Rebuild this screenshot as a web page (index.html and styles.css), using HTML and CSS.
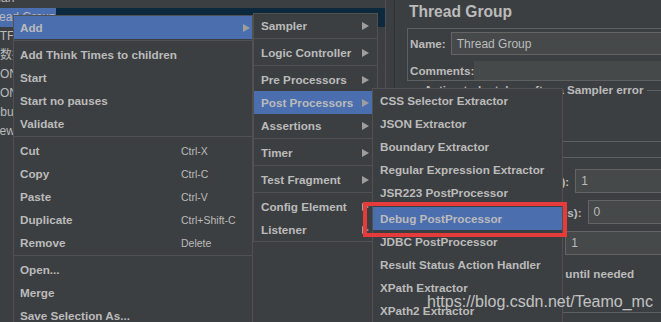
FILE: index.html
```html
<!DOCTYPE html>
<html lang="en">
<head>
  <meta charset="UTF-8">
  <title>Thread Group</title>
  <link rel="stylesheet" href="styles.css">
</head>
<body>

  <div class="app">
    <div class="tree">
      <div class="tree-row"><span class="node cut-plan">Test Plan</span></div>
      <div class="tree-row selected"><span class="node cut-thread">Thread Group</span></div>
      <div class="tree-row"><span class="node cut-utf">UTF-8 编码</span></div>
      <div class="tree-row"><span class="node cut-csv">CSV 数据文件设置</span></div>
      <div class="tree-row"><span class="node cut-json">JSON Extractor</span></div>
      <div class="tree-row"><span class="node cut-json">JSON Assertion</span></div>
      <div class="tree-row"><span class="node cut-debug">Debug Sampler</span></div>
      <div class="tree-row"><span class="node cut-view">View Results Tree</span></div>
    </div>

    <div class="splitter"></div>

    <div class="editor">
      <div class="editor-title">Thread Group</div>

      <div class="name-box">
        <div class="field-row">
          <label class="name-label">Name:</label>
          <div class="input">Thread Group</div>
        </div>
        <div class="field-row comments-row">
          <label>Comments:</label>
          <div class="area"></div>
        </div>
      </div>

      <fieldset class="group error-group">
        <legend>Action to be taken after a Sampler error</legend>
        <div class="radios">
          <span class="radio"></span><span>Continue</span>
        </div>
      </fieldset>

      <fieldset class="group props-group">
        <legend>Thread Properties</legend>
        <div class="prop-row">
          <label>Number of Threads (users):</label>
          <div class="input">1</div>
        </div>
        <div class="prop-row">
          <label>Ramp-up period (in seconds):</label>
          <div class="input">0</div>
        </div>
        <div class="prop-row loop-row">
          <label>Loop Count:</label>
          <span class="check"></span>
          <span class="forever">Forever</span>
          <div class="input">1</div>
        </div>
        <div class="check-row">
          <span class="check"></span>
          <span>Delay Thread creation until needed</span>
        </div>
        <div class="check-row">
          <span class="check"></span>
          <span>Scheduler</span>
        </div>
      </fieldset>
    </div>
  </div>

  <div class="menu main-menu">
    <div class="item active"><span class="label">Add</span><span class="arrow"></span></div>
    <div class="sep"></div>
    <div class="item"><span class="label">Add Think Times to children</span></div>
    <div class="item"><span class="label">Start</span></div>
    <div class="item"><span class="label">Start no pauses</span></div>
    <div class="item"><span class="label">Validate</span></div>
    <div class="sep"></div>
    <div class="item"><span class="label">Cut</span><span class="key">Ctrl-X</span></div>
    <div class="item"><span class="label">Copy</span><span class="key">Ctrl-C</span></div>
    <div class="item"><span class="label">Paste</span><span class="key">Ctrl-V</span></div>
    <div class="item"><span class="label">Duplicate</span><span class="key">Ctrl+Shift-C</span></div>
    <div class="item"><span class="label">Remove</span><span class="key">Delete</span></div>
    <div class="sep"></div>
    <div class="item"><span class="label">Open...</span></div>
    <div class="item"><span class="label">Merge</span></div>
    <div class="item"><span class="label">Save Selection As...</span></div>
  </div>

  <div class="menu sub-menu">
    <div class="item"><span class="label">Sampler</span><span class="arrow"></span></div>
    <div class="sep"></div>
    <div class="item"><span class="label">Logic Controller</span><span class="arrow"></span></div>
    <div class="sep"></div>
    <div class="item"><span class="label">Pre Processors</span><span class="arrow"></span></div>
    <div class="item active"><span class="label">Post Processors</span><span class="arrow"></span></div>
    <div class="item"><span class="label">Assertions</span><span class="arrow"></span></div>
    <div class="sep"></div>
    <div class="item"><span class="label">Timer</span><span class="arrow"></span></div>
    <div class="sep"></div>
    <div class="item"><span class="label">Test Fragment</span><span class="arrow"></span></div>
    <div class="sep"></div>
    <div class="item"><span class="label">Config Element</span><span class="arrow"></span></div>
    <div class="item"><span class="label">Listener</span><span class="arrow"></span></div>
  </div>

  <div class="menu post-menu">
    <div class="item"><span class="label">CSS Selector Extractor</span></div>
    <div class="item"><span class="label">JSON Extractor</span></div>
    <div class="item"><span class="label">Boundary Extractor</span></div>
    <div class="item"><span class="label">Regular Expression Extractor</span></div>
    <div class="item"><span class="label">JSR223 PostProcessor</span></div>
    <div class="sep thin"></div>
    <div class="item active"><span class="label">Debug PostProcessor</span></div>
    <div class="item"><span class="label">JDBC PostProcessor</span></div>
    <div class="item"><span class="label">Result Status Action Handler</span></div>
    <div class="item"><span class="label">XPath Extractor</span></div>
    <div class="item"><span class="label">XPath2 Extractor</span></div>
  </div>

  <div class="mark"></div>

  <div class="watermark">https://blog.csdn.net/Teamo_mc</div>

</body>
</html>
```

FILE: styles.css
```css
body {
  margin: 0;
  height: 322px;
  overflow: hidden;
  background: #3c3f41;
  color: #bbbbbb;
  font-family: "Liberation Sans", Arial, "Noto Sans CJK SC", sans-serif;
}

.app {
  display: flex;
  height: 322px;
}

/* left tree */

.tree {
  width: 385px;
  flex: none;
  margin-top: -11px;
  overflow: hidden;
  font-size: 12px;
}

.tree-row {
  height: 19px;
  line-height: 19px;
  white-space: nowrap;
}

.tree-row.selected {
  background: #0d293e;
}

.tree-row.selected .node {
  background: #4b6eaf;
  display: inline-block;
}

.cut-plan { margin-left: -35px; }
.cut-thread { margin-left: -19px; }
.cut-utf { margin-left: -9px; }
.cut-csv { margin-left: -28px; }
.cut-json { margin-left: -14px; }
.cut-debug { margin-left: -15px; }
.cut-view { margin-left: -11px; }

.splitter {
  width: 8px;
  flex: none;
  border-left: 1px solid #515151;
  border-right: 1px solid #2f3133;
}

/* right editor */

.editor {
  flex: 1;
  padding-left: 12px;
  margin-right: -30px;
  font-size: 11.7px;
  font-weight: bold;
}

.editor-title {
  height: 27px;
  padding: 1px 0 0 2px;
  box-sizing: border-box;
  height: 28px;
  line-height: 22px;
  font-size: 15.6px;
}

.name-box {
  border: 1px solid #5e6060;
  padding: 3px 0 0 2px;
}

.field-row {
  display: flex;
  align-items: center;
  height: 23px;
}

.name-label {
  margin-right: 5px;
}

.comments-row {
  margin-top: 6px;
  height: 19px;
}

.input {
  flex: 1;
  height: 100%;
  box-sizing: border-box;
  background: #45494a;
  border: 1px solid #646464;
  padding-left: 5px;
  display: flex;
  align-items: center;
  font-size: 12px;
  font-weight: normal;
}

.area {
  flex: 1;
  height: 100%;
  background: #45494a;
}

.group {
  margin: 2px 0 0;
  padding: 0 0 0 8px;
  border: 1px solid #5e6060;
}

.group legend {
  margin-left: 5px;
  padding: 0 3px;
  line-height: 14px;
}

.error-group .radios {
  height: 44px;
  display: flex;
  align-items: center;
  gap: 6px;
}

.radio {
  width: 12px;
  height: 12px;
  border-radius: 50%;
  border: 1px solid #6b6b6b;
  background: #43494a;
}

.props-group {
  margin-top: 8px;
  padding-top: 5px;
  padding-bottom: 6px;
}

.prop-row {
  display: flex;
  align-items: center;
  height: 24px;
  margin-bottom: 7px;
}

.prop-row label {
  margin-right: 6px;
}

.loop-row .check {
  margin: 0 4px 0 0;
}

.loop-row .forever {
  margin-right: 13px;
}

.check {
  width: 12px;
  height: 12px;
  border: 1px solid #6b6b6b;
  background: #43494a;
  flex: none;
}

.check-row {
  display: flex;
  align-items: center;
  gap: 8px;
  height: 20px;
  margin-top: 8px;
  padding-left: 2px;
}

.check-row + .check-row {
  margin-top: 3px;
}

/* popup menus */

.menu {
  position: absolute;
  box-sizing: border-box;
  background: #3c3f41;
  border: 1px solid #515151;
  font-size: 11.7px;
  font-weight: bold;
  color: #bbbbbb;
}

.item {
  display: flex;
  align-items: center;
  height: 23px;
  padding: 0 8px 0 7px;
  white-space: nowrap;
}

.item.active {
  background: #4b6eaf;
}

.sep {
  height: 1px;
  margin: 1px 0 2px;
  background: #515151;
}

.sep.thin {
  margin: 1px 0 1px;
}

.arrow {
  width: 0;
  height: 0;
  margin-left: auto;
  border-left: 7px solid #9e9e9e;
  border-top: 4px solid transparent;
  border-bottom: 4px solid transparent;
}

.key {
  font-size: 10.5px;
  font-weight: normal;
}

.main-menu {
  left: 13px;
  top: 15px;
  width: 240px;
  height: 330px;
}

.main-menu .item {
  padding: 0 2px 0 6px;
}

.main-menu .label {
  width: 161px;
  flex: none;
}

.sub-menu {
  left: 253px;
  top: 13px;
  width: 125px;
}

.post-menu {
  left: 372px;
  top: 88px;
  width: 191px;
  height: 250px;
}

.mark {
  position: absolute;
  left: 363px;
  top: 202px;
  width: 204px;
  height: 35px;
  box-sizing: border-box;
  border: 4px solid #e63b3b;
}

.watermark {
  position: absolute;
  left: 427px;
  top: 293px;
  font-size: 16px;
  color: rgba(230, 230, 230, 0.8);
  white-space: nowrap;
}
```
